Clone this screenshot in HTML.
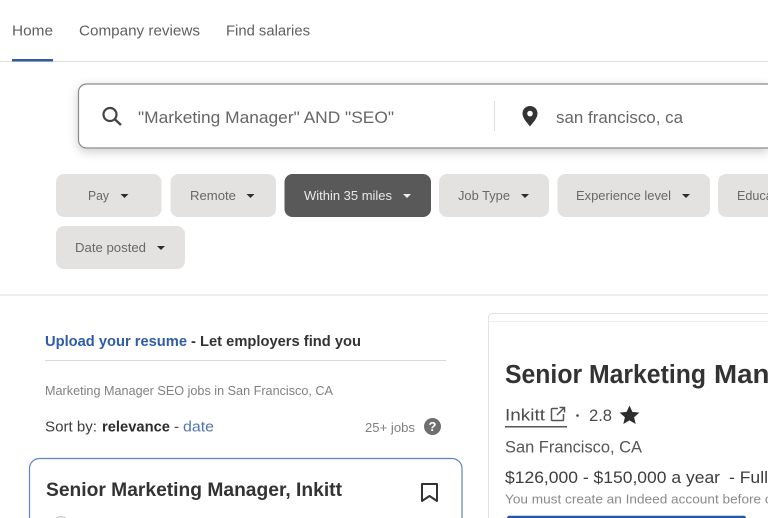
<!DOCTYPE html>
<html><head><meta charset="utf-8"><title>Jobs</title>
<style>
html,body{margin:0;padding:0;background:#fff;width:768px;height:518px;overflow:hidden}
svg{display:block;overflow:hidden;filter:blur(.35px)}
text{font-family:"Liberation Sans",sans-serif;white-space:pre}
.pill{font-size:13px;fill:#6a6866}
</style></head><body>
<svg width="768" height="518" viewBox="0 0 768 518" xmlns="http://www.w3.org/2000/svg">
<defs><filter id="sh" x="-5%" y="-30%" width="110%" height="170%"><feDropShadow dx="0" dy="3" stdDeviation="5" flood-color="#000" flood-opacity=".2"/></filter></defs>
<rect width="768" height="518" fill="#fff"/>

<!-- nav -->
<text x="12" y="35.500" font-size="15" fill="#5f5f5f" textLength="41" lengthAdjust="spacingAndGlyphs">Home</text>
<text x="79" y="35.500" font-size="15" fill="#5f5f5f" textLength="121" lengthAdjust="spacingAndGlyphs">Company reviews</text>
<text x="226" y="35.500" font-size="15" fill="#5f5f5f" textLength="84" lengthAdjust="spacingAndGlyphs">Find salaries</text>
<rect x="0" y="61" width="768" height="1" fill="#dfdede"/>
<rect x="12" y="59" width="41" height="2.500" fill="#2f5ca6"/>

<!-- search -->
<path d="M768 84H86.500a8 8 0 0 0-8 8v48a8 8 0 0 0 8 8H768" fill="#fff" stroke="#8a8a8a" stroke-width="1.200" filter="url(#sh)"/>
<circle cx="110" cy="114.500" r="6.500" fill="none" stroke="#444" stroke-width="2.200"/>
<path d="M114.800 119.300 L121 125" stroke="#444" stroke-width="2.400" fill="none"/>
<text x="138" y="123" font-size="17" fill="#666" textLength="256" lengthAdjust="spacingAndGlyphs">"Marketing Manager" AND "SEO"</text>
<rect x="494" y="101" width="1" height="30" fill="#dcdcdc"/>
<path fill-rule="evenodd" fill="#333" d="M530 106c-4.300 0-7.500 3.300-7.500 7.500 0 5 5 9.500 7.500 13 2.500-3.500 7.500-8 7.500-13 0-4.200-3.200-7.500-7.500-7.500zm0 4.800a2.800 2.800 0 1 1 0 5.600 2.800 2.800 0 0 1 0-5.600z"/>
<text x="556" y="123" font-size="17" fill="#666" textLength="127" lengthAdjust="spacingAndGlyphs">san francisco, ca</text>

<!-- pills -->
<rect x="56" y="174" width="105.500" height="43" rx="8" fill="#e4e2e0"/>
<text class="pill" x="88" y="200" textLength="21" lengthAdjust="spacingAndGlyphs">Pay</text>
<path d="M120.500 194h8l-4 4z" fill="#2d2d2d"/>

<rect x="170.500" y="174" width="105.500" height="43" rx="8" fill="#e4e2e0"/>
<text class="pill" x="190" y="200" textLength="46" lengthAdjust="spacingAndGlyphs">Remote</text>
<path d="M246.500 194h8l-4 4z" fill="#2d2d2d"/>

<rect x="284.500" y="174" width="146.500" height="43" rx="8" fill="#595959"/>
<text class="pill" style="fill:#e8e8e8" x="304" y="200" textLength="88" lengthAdjust="spacingAndGlyphs">Within 35 miles</text>
<path d="M403 194h8l-4 4z" fill="#f0f0f0"/>

<rect x="439" y="174" width="110" height="43" rx="8" fill="#e4e2e0"/>
<text class="pill" x="458" y="200" textLength="52" lengthAdjust="spacingAndGlyphs">Job Type</text>
<path d="M521 194h8l-4 4z" fill="#2d2d2d"/>

<rect x="557.500" y="174" width="152.500" height="43" rx="8" fill="#e4e2e0"/>
<text class="pill" x="576" y="200" textLength="95" lengthAdjust="spacingAndGlyphs">Experience level</text>
<path d="M682 194h8l-4 4z" fill="#2d2d2d"/>

<path d="M768 174H726a8 8 0 0 0-8 8v27a8 8 0 0 0 8 8H768z" fill="#e4e2e0"/>
<text class="pill" x="737" y="200" textLength="56" lengthAdjust="spacingAndGlyphs">Education</text>

<rect x="56" y="226" width="129" height="43" rx="8" fill="#e4e2e0"/>
<text class="pill" x="75" y="252" textLength="71" lengthAdjust="spacingAndGlyphs">Date posted</text>
<path d="M157 246h8l-4 4z" fill="#2d2d2d"/>

<rect x="0" y="294.500" width="768" height="1" fill="#dcdcdc"/>

<!-- left column -->
<text x="45" y="346" font-size="14.500" font-weight="bold" fill="#2f5ca6" textLength="142" lengthAdjust="spacingAndGlyphs">Upload your resume</text>
<text x="191" y="346" font-size="14.500" font-weight="bold" fill="#333" textLength="170" lengthAdjust="spacingAndGlyphs">- Let employers find you</text>
<rect x="45" y="360" width="401" height="1" fill="#d8d8d8"/>
<text x="45" y="395" font-size="12.500" fill="#808080" textLength="288" lengthAdjust="spacingAndGlyphs">Marketing Manager SEO jobs in San Francisco, CA</text>
<text x="45" y="431.500" font-size="15" fill="#3d3d3d" textLength="52" lengthAdjust="spacingAndGlyphs">Sort by:</text>
<text x="102" y="431.500" font-size="15" font-weight="bold" fill="#2d2d2d" textLength="68" lengthAdjust="spacingAndGlyphs">relevance</text>
<text x="174" y="431.500" font-size="15" fill="#444">-</text>
<text x="183" y="431.500" font-size="15" fill="#4f76b3" textLength="31" lengthAdjust="spacingAndGlyphs">date</text>
<text x="365" y="432" font-size="13" fill="#808080" textLength="50" lengthAdjust="spacingAndGlyphs">25+ jobs</text>
<circle cx="432.500" cy="426.500" r="8.500" fill="#6f6f6f"/>
<text x="432.500" y="431" font-size="13" font-weight="bold" fill="#fff" text-anchor="middle">?</text>

<path d="M29.500 518V468.500a10 10 0 0 1 10-10H452a10 10 0 0 1 10 10V518" fill="#fff" stroke="#5f84bf" stroke-width="1.200"/>
<text x="46" y="496" font-size="19.500" font-weight="bold" fill="#333" textLength="296" lengthAdjust="spacingAndGlyphs">Senior Marketing Manager, Inkitt</text>
<path d="M422 484h15v17l-7.500-5-7.500 5z" fill="none" stroke="#333" stroke-width="2" stroke-linejoin="round"/>
<path d="M56 518l5-1.500 5 1.500" fill="none" stroke="#bbb" stroke-width="1"/>

<!-- right panel -->
<path d="M768 313.500H492.500a4 4 0 0 0-4 4V518" fill="#fff" stroke="#e4e2e0"/>
<rect x="489" y="321" width="279" height="1" fill="#ececec"/>
<text x="505" y="383" font-size="25.500" font-weight="bold" fill="#333" textLength="201" lengthAdjust="spacingAndGlyphs">Senior Marketing</text>
<text x="714" y="383" font-size="25.500" font-weight="bold" fill="#333" textLength="114" lengthAdjust="spacingAndGlyphs">Manager</text>
<text x="505" y="420.500" font-size="16.500" fill="#4a4a4a" textLength="40" lengthAdjust="spacingAndGlyphs">Inkitt</text>
<path d="M558 408.500h-5.500a1 1 0 0 0-1 1v10a1 1 0 0 0 1 1h10a1 1 0 0 0 1-1v-5.500M557 415l7-7M559.500 407.500h5v5" fill="none" stroke="#555" stroke-width="1.500"/>
<rect x="505" y="426" width="62" height="1.500" fill="#555"/>
<circle cx="577.500" cy="415.500" r="1.300" fill="#444"/>
<text x="589" y="421" font-size="16.500" fill="#4a4a4a" textLength="23" lengthAdjust="spacingAndGlyphs">2.8</text>
<path d="M629.500 405.500l2.900 6.400 7 .7-5.300 4.600 1.600 6.800-6.200-3.600-6.200 3.600 1.600-6.800-5.300-4.600 7-.7z" fill="#2d2d2d"/>
<text x="505" y="452.500" font-size="16.500" fill="#555" textLength="137" lengthAdjust="spacingAndGlyphs">San Francisco, CA</text>
<text x="505" y="483" font-size="16.500" fill="#3d3d3d" textLength="215" lengthAdjust="spacingAndGlyphs">$126,000 - $150,000 a year</text>
<text x="729" y="483" font-size="16.500" fill="#3d3d3d" textLength="78" lengthAdjust="spacingAndGlyphs">- Full-time</text>
<text x="505" y="503.500" font-size="13" fill="#8a8a8a" textLength="322" lengthAdjust="spacingAndGlyphs">You must create an Indeed account before continuing</text>
<path d="M507 518v-.5a3 3 0 0 1 3-1.800h233a3 3 0 0 1 3 1.800v.5z" fill="#2557a7"/>
</svg>
</body></html>
